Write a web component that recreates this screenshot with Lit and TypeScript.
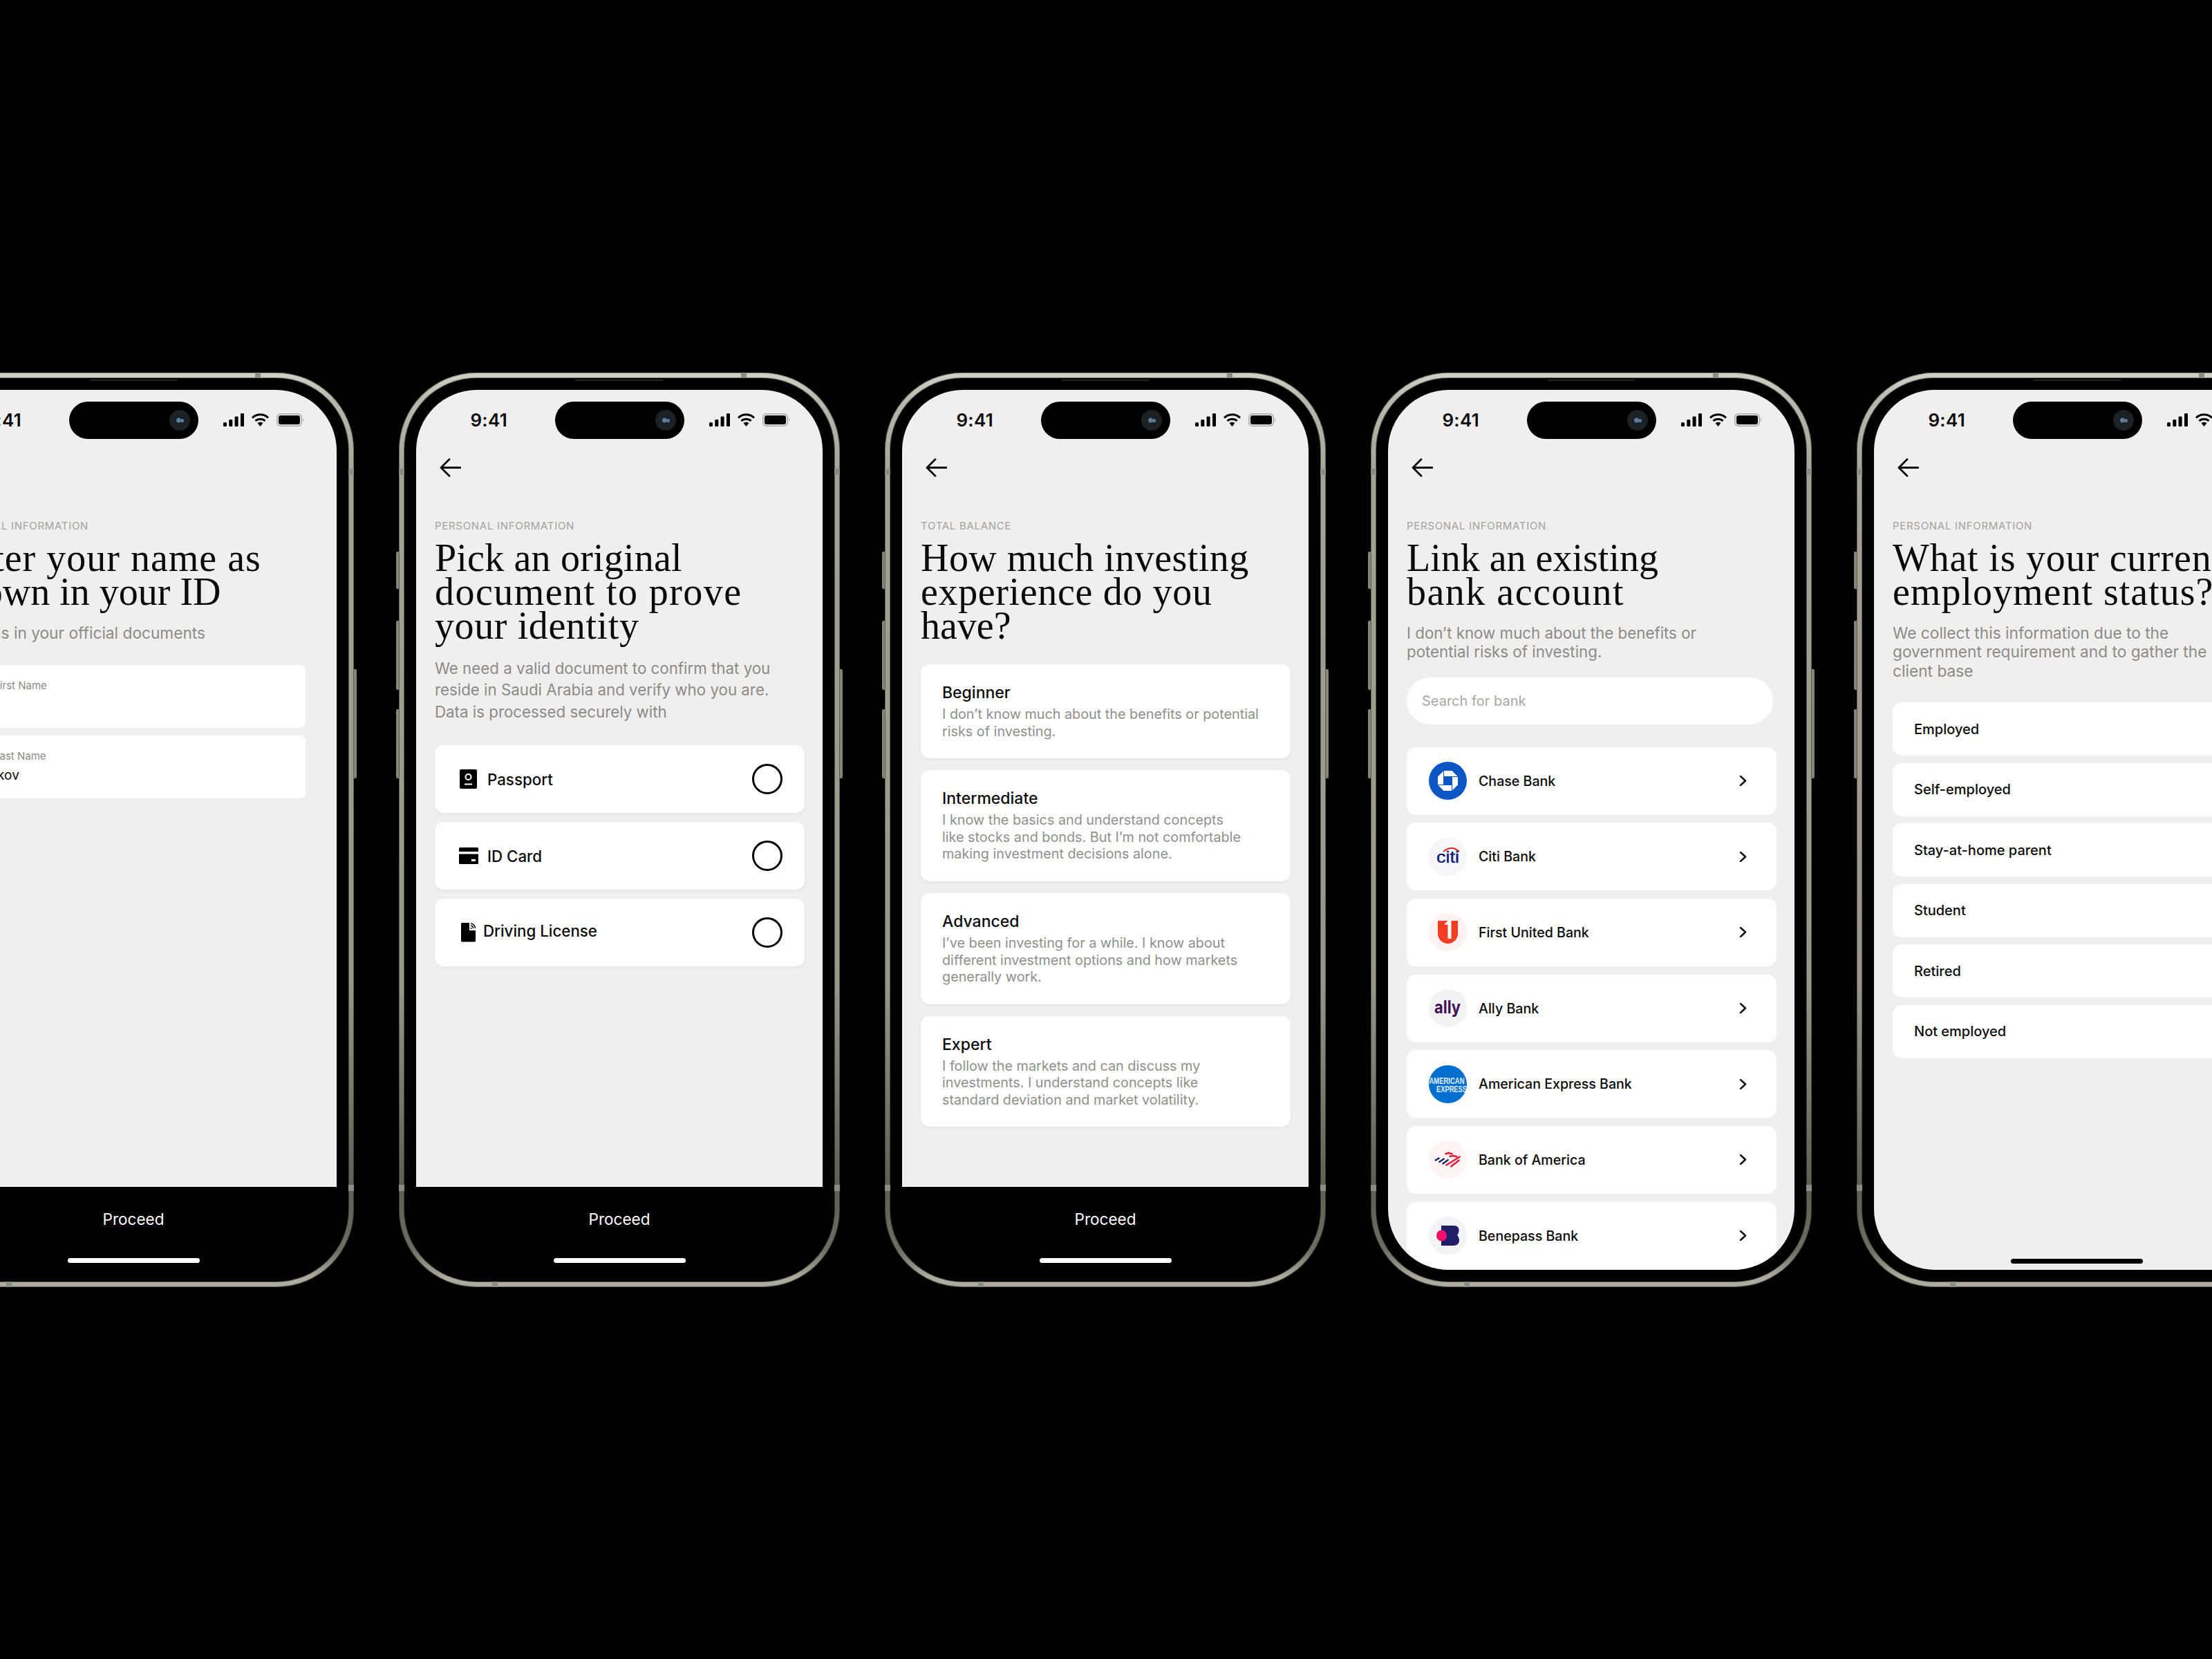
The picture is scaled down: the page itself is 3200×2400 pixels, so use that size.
import { LitElement, html, css, nothing } from "lit";
import { customElement } from "lit/decorators.js";

const chevron = html`<svg class="chev" width="11" height="15" viewBox="0 0 11 15"><path d="M2 1 L9 7.5 L2 14" fill="none" stroke="#0a0a0a" stroke-width="2.4" stroke-linecap="round" stroke-linejoin="round"/></svg>`;

const arrow = html`<svg width="31" height="27" viewBox="0 0 31 27"><path d="M30 13.5 H2.5 M14 1.5 L2 13.5 L14 25.5" fill="none" stroke="#0a0a0a" stroke-width="2.8" stroke-linecap="round" stroke-linejoin="round"/></svg>`;

const passport = html`<svg width="25" height="28" viewBox="0 0 25 28"><rect width="25" height="28" rx="2" fill="#000"/><circle cx="12.5" cy="11" r="4" fill="none" stroke="#fff" stroke-width="2.2"/><rect x="7" y="20.5" width="11" height="2" fill="#fff"/></svg>`;
const idcard = html`<svg width="28" height="24" viewBox="0 0 28 24"><path d="M1.5 0 H26.5 A1.5 1.5 0 0 1 28 1.5 V6 H0 V1.5 A1.5 1.5 0 0 1 1.5 0 Z M0 9.5 H28 V22.5 A1.5 1.5 0 0 1 26.5 24 H1.5 A1.5 1.5 0 0 1 0 22.5 Z" fill="#000"/><rect x="18" y="17" width="6" height="3" fill="#fff"/></svg>`;
const license = html`<svg width="21" height="28" viewBox="0 0 21 28"><path d="M1.5 0 H12 V11 H21 V26 A1.5 1.5 0 0 1 19.5 27.5 H1.5 A1.5 1.5 0 0 1 0 26 V1.5 A1.5 1.5 0 0 1 1.5 0 Z" fill="#000"/><g fill="none" stroke="#000" stroke-width="1.5"><path d="M14 1 A7 7 0 0 1 20.5 8"/><path d="M14 4 A4 4 0 0 1 17.5 8"/></g><circle cx="14.5" cy="8" r="1" fill="#000"/></svg>`;

const chase = html`<svg class="logo" viewBox="0 0 55 55"><circle cx="27.5" cy="27.5" r="27.5" fill="#0b57c5"/><g transform="translate(12.5 12.5)" fill="#fff" stroke="#0b57c5" stroke-width="1"><polygon points="9,0 21,0 30,9 9,9"/><polygon points="30,9 30,21 21,30 21,9"/><polygon points="21,30 9,30 0,21 21,21"/><polygon points="0,21 0,9 9,0 9,21"/></g></svg>`;
const citi = html`<svg class="logo" viewBox="0 0 55 55"><circle cx="27.5" cy="27.5" r="27.5" fill="#f6f6f9"/><path d="M21 20 Q33 10 44 20" fill="none" stroke="#e2231a" stroke-width="1.8"/><text x="11" y="36" class="citi" textLength="33" lengthAdjust="spacingAndGlyphs">citi</text></svg>`;
const first = html`<svg class="logo" viewBox="0 0 55 55"><circle cx="27.5" cy="27.5" r="27.5" fill="#fdf2f0"/><g transform="translate(13 11)"><path d="M0 0 H29 V18.5 A14.5 14.5 0 0 1 0 18.5 Z" fill="#f23c24"/><polygon points="9,5.5 14.5,0 19.5,0 19.5,26 14.5,26 14.5,5.5" fill="#fff"/></g></svg>`;
const ally = html`<svg class="logo" viewBox="0 0 55 55"><circle cx="27.5" cy="27.5" r="27.5" fill="#f4f1f5"/><text x="8" y="35" class="ally" textLength="38" lengthAdjust="spacingAndGlyphs">ally</text></svg>`;
const amex = html`<svg class="logo" viewBox="0 0 55 55"><defs><clipPath id="amexc"><circle cx="27.5" cy="27.5" r="27.5"/></clipPath></defs><circle cx="27.5" cy="27.5" r="27.5" fill="#016fd0"/><g clip-path="url(#amexc)"><text x="0.5" y="27" class="amex" textLength="51" lengthAdjust="spacingAndGlyphs">AMERICAN</text><text x="11" y="38.5" class="amex" textLength="44" lengthAdjust="spacingAndGlyphs">EXPRESS</text></g></svg>`;
const bofa = html`<svg class="logo" viewBox="0 0 55 55"><circle cx="27.5" cy="27.5" r="27.5" fill="#fdf3f3"/><g transform="translate(8.5 17)" fill="none" stroke-width="2.4"><path d="M0.5 12 L7 8 M6 14.5 L14 9 M11 17 L20 10.5" stroke="#1b2a6b"/><path d="M15 2.5 L20 0.8 L26 2.5 M21 6 L27 5 L33 6.5 M16 19 L37 6 M23 21 L36 11" stroke="#e31837"/></g></svg>`;
const bene = html`<svg class="logo" viewBox="0 0 55 55"><circle cx="27.5" cy="27.5" r="27.5" fill="#f3f3f7"/><path d="M18 13 H36 C45 13 45 22 41 27 C46 32 45 42 36 42 H18 Z" fill="#1f1d66"/><ellipse cx="18.5" cy="27.5" rx="7.5" ry="8" fill="#f0116a"/></svg>`;

type Phone = {
  label: string;
  head: [string, number][];
  para?: string[];
  back: boolean;
  kind: string;
};

const phones: Phone[] = [
  {
    label: "PERSONAL INFORMATION",
    head: [["Enter your name as", 1], ["shown in your ID", 0]],
    para: ["Write as in your official documents"],
    back: false,
    kind: "name",
  },
  {
    label: "PERSONAL INFORMATION",
    head: [["Pick an original", 0.2], ["document to prove", 1.45], ["your identity", 0.6]],
    para: [
      "We need a valid document to confirm that you",
      "reside in Saudi Arabia and verify who you are.",
      "Data is processed securely with",
    ],
    back: true,
    kind: "doc",
  },
  {
    label: "TOTAL BALANCE",
    head: [["How much investing", 0.45], ["experience do you", 0.65], ["have?", 0]],
    back: true,
    kind: "exp",
  },
  {
    label: "PERSONAL INFORMATION",
    head: [["Link an existing", 0], ["bank account", 1.5]],
    para: ["I don’t know much about the benefits or", "potential risks of investing."],
    back: true,
    kind: "bank",
  },
  {
    label: "PERSONAL INFORMATION",
    head: [["What is your current", 0.8], ["employment status?", 1]],
    para: [
      "We collect this information due to the",
      "government requirement and to gather the",
      "client base",
    ],
    back: true,
    kind: "job",
  },
];

const banks = [
  [chase, "Chase Bank"],
  [citi, "Citi Bank"],
  [first, "First United Bank"],
  [ally, "Ally Bank"],
  [amex, "American Express Bank"],
  [bofa, "Bank of America"],
  [bene, "Benepass Bank"],
] as const;

const levels = [
  ["Beginner", ["I don’t know much about the benefits or potential", "risks of investing."]],
  ["Intermediate", ["I know the basics and understand concepts", "like stocks and bonds. But I’m not comfortable", "making investment decisions alone."]],
  ["Advanced", ["I’ve been investing for a while. I know about", "different investment options and how markets", "generally work."]],
  ["Expert", ["I follow the markets and can discuss my", "investments. I understand concepts like", "standard deviation and market volatility."]],
] as const;

const jobs = ["Employed", "Self-employed", "Stay-at-home parent", "Student", "Retired", "Not employed"];

@customElement("app-root")
export class AppRoot extends LitElement {
  static styles = css`
    :host {
      display: flex;
      justify-content: center;
      align-items: center;
      width: 3200px;
      height: 2400px;
      overflow: hidden;
      background: #000;
      font-family: Inter, "Liberation Sans", sans-serif;
      color: #0a0a0a;
    }
    .row { display: flex; gap: 65px; flex: none; margin-left: -2px; }
    .phone {
      position: relative;
      flex: none;
      box-sizing: border-box;
      width: 638px;
      height: 1323px;
      padding: 8px;
      border-radius: 112px;
      background: linear-gradient(180deg, #d3d2c6 0%, #bab9ad 3%, #a3a295 12%, #979689 67%, #5f5e52 89%, #6f6e62 96%, #adac9f 99%);
      box-shadow: inset 0 0 0 1px rgba(0, 0, 0, 0.4);
    }
    .bezel {
      box-sizing: border-box;
      height: 100%;
      padding: 17px;
      border-radius: 104px;
      background: #000;
      box-shadow: 0 0 0 1px rgba(0, 0, 0, 0.4);
    }
    .screen {
      position: relative;
      display: flex;
      flex-direction: column;
      height: 100%;
      border-radius: 88px;
      overflow: hidden;
      background: #f0efed;
    }
    .screen.footed { background: linear-gradient(180deg, #f0efed 1153px, #000 1153px); }
    .band { position: absolute; background: #8d8b85; }
    .band.top { left: 495px; top: 0; width: 8px; height: 8px; }
    .band.l1 { left: 0; top: 139px; width: 8px; height: 9px; }
    .band.r1 { right: 0; top: 139px; width: 8px; height: 9px; }
    .band.l2 { left: 0; top: 1175px; width: 8px; height: 9px; }
    .band.r2 { right: 0; top: 1175px; width: 8px; height: 9px; }
    .band.bot { left: 135px; bottom: 0; width: 8px; height: 8px; }
    .speaker { position: absolute; left: 256px; top: 10px; width: 126px; height: 2px; background: #2a2618; }
    .btn { position: absolute; width: 4px; background: #85847a; border-radius: 2px 0 0 2px; }
    .btn.a { left: -4px; top: 259px; height: 54px; }
    .btn.b { left: -4px; top: 359px; height: 100px; }
    .btn.c { left: -4px; top: 487px; height: 100px; }
    .btn.d { right: -4px; top: 429px; height: 158px; border-radius: 0 2px 2px 0; }

    .status {
      display: grid;
      grid-template-columns: 1fr 187px 1fr;
      align-items: center;
      flex: none;
      padding-top: 17px;
      height: 54px;
    }
    .time { padding-left: 10px; text-align: center; font-size: 26px; font-weight: 600; letter-spacing: 0.3px; }
    .island {
      display: flex;
      align-items: center;
      justify-content: flex-end;
      box-sizing: border-box;
      height: 54px;
      padding-right: 12px;
      border-radius: 27px;
      background: #000;
    }
    .cam {
      width: 30px;
      height: 30px;
      border-radius: 50%;
      background: radial-gradient(circle at 45% 50%, #5c7c99 0 3px, transparent 4px),
        radial-gradient(circle at 62% 52%, #5c7c99 0 2px, transparent 3px), #1c2126;
    }
    .icons { display: flex; align-items: center; gap: 11px; padding-left: 36px; }

    .nav { flex: none; height: 27px; margin-top: 28px; padding-left: 34px; }
    .body { flex: 1; min-height: 0; padding: 0 26px 0 27px; }
    .label {
      margin-top: 61.5px;
      font-size: 15px;
      line-height: 20px;
      font-weight: 400;
      letter-spacing: 0.7px;
      color: #a3a3a1;
      white-space: nowrap;
    }
    .head {
      margin: 11.5px 0 0;
      font-family: "Liberation Serif", serif;
      font-weight: 400;
      font-size: 56px;
      line-height: 49px;
      color: #0a0a0a;
      white-space: nowrap;
    }
    .para {
      margin: 21px 0 0;
      font-size: 22.3px;
      line-height: 27.5px;
      color: #8b8b89;
      white-space: nowrap;
    }
    .para.loose { line-height: 31.5px; }
    .para.wide { font-size: 22.7px; }
    .list { display: flex; flex-direction: column; margin-top: 33px; }
    .card { box-sizing: border-box; flex: none; background: #fff; border-radius: 13px; }
    .shadow { box-shadow: 0 2px 4px rgba(0, 0, 0, 0.05); }

    .list.name { gap: 11px; margin-right: 19px; }
    .field { height: 91px; padding: 20px 0 0 65px; border-radius: 8px; }
    .field .k { font-size: 15px; line-height: 20px; color: #8b8b89; }
    .field .v { margin-top: 6px; font-size: 19px; line-height: 24px; }

    .list.doc { gap: 13px; }
    .doc-row {
      display: flex;
      align-items: center;
      height: 98px;
      padding: 0 32px 0 33px;
      font-size: 22.3px;
      font-weight: 500;
    }
    .ic { display: flex; justify-content: center; align-items: center; width: 31px; margin-right: 12px; }
    .doc-row.tight .ic { margin-right: 6px; }
    .doc-row.tight span { padding-bottom: 5px; }
    .radio { box-sizing: border-box; width: 44px; height: 44px; margin-left: auto; border: 3px solid #000; border-radius: 50%; }

    .list.exp { gap: 17.3px; margin-top: 31.6px; }
    .exp-card { padding: 27px 31px; }
    .exp-card .t { font-size: 23px; line-height: 28px; font-weight: 500; }
    .exp-card .d { margin-top: 5px; font-size: 19.8px; line-height: 24.5px; color: #8f8f8d; white-space: nowrap; }

    .search {
      box-sizing: border-box;
      display: flex;
      align-items: center;
      height: 68px;
      margin: 23px 5px 0 0;
      padding-left: 22px;
      border-radius: 34px;
      background: #fff;
      font-size: 20px;
      color: #a8a8a6;
    }
    .list.bank { gap: 11.7px; }
    .bank-row {
      display: flex;
      align-items: center;
      height: 98px;
      padding: 0 43px 0 32px;
      font-size: 19.6px;
      font-weight: 500;
    }
    .logo { flex: none; display: block; width: 55px; height: 55px; margin-right: 17px; }
    .chev { margin-left: auto; flex: none; }
    .citi { font: 400 24px "Liberation Sans", sans-serif; fill: #10157a; stroke: #10157a; stroke-width: 0.4px; }
    .ally { font: 700 25px Inter, sans-serif; fill: #3c1053; }
    .amex { font: 700 13px "Liberation Sans", sans-serif; fill: #e3effa; }

    .list.job { gap: 10.6px; margin-top: 32px; }
    .job-row {
      display: flex;
      align-items: center;
      height: 77px;
      padding-left: 31px;
      font-size: 20px;
      font-weight: 500;
    }

    .foot {
      flex: none;
      display: flex;
      flex-direction: column;
      align-items: center;
      height: 120px;
      color: #fff;
      font-size: 22.5px;
      font-weight: 400;
    }
    .proceed { margin-top: 32px; line-height: 30px; }
    .home { width: 191px; height: 7px; margin-top: 41px; border-radius: 4px; background: #fff; }
    .home.over { position: absolute; left: 198px; bottom: 9px; margin: 0; background: #000; }
  `;

  private status() {
    return html`<div class="status">
      <div class="time">9:41</div>
      <div class="island"><div class="cam"></div></div>
      <div class="icons">
        <svg width="30" height="19" viewBox="0 0 30 19"><g fill="#000"><rect x="0" y="13" width="5" height="6" rx="1.5"/><rect x="8.3" y="9" width="5" height="10" rx="1.2"/><rect x="16.6" y="4.5" width="5" height="14.5" rx="1.2"/><rect x="25" y="0" width="5" height="19" rx="1.2"/></g></svg>
        <svg width="25" height="19" viewBox="0 0 25 19"><g fill="none" stroke="#000" stroke-width="3"><path d="M1 6.5 A16.5 16.5 0 0 1 24 6.5"/><path d="M5.5 11 A10 10 0 0 1 19.5 11"/></g><path d="M12.5 19 L8.5 14 A6.5 6.5 0 0 1 16.5 14 Z" fill="#000"/></svg>
        <svg width="41" height="19" viewBox="0 0 41 19"><rect x="0.8" y="0.8" width="35.4" height="17.4" rx="5" fill="none" stroke="#a6a6a4" stroke-width="1.5"/><rect x="3" y="3" width="31" height="13" rx="3.2" fill="#000"/><path d="M38 6.5 Q40.5 9.5 38 12.5 Z" fill="#a6a6a4"/></svg>
      </div>
    </div>`;
  }

  private content(p: Phone) {
    switch (p.kind) {
      case "name":
        return html`<div class="list name">
          <div class="card field"><div class="k">First Name</div></div>
          <div class="card field"><div class="k">Last Name</div><div class="v">Ikov</div></div>
        </div>`;
      case "doc":
        return html`<div class="list doc">
          <div class="card shadow doc-row"><div class="ic">${passport}</div><span>Passport</span><div class="radio"></div></div>
          <div class="card shadow doc-row"><div class="ic">${idcard}</div><span>ID Card</span><div class="radio"></div></div>
          <div class="card shadow doc-row tight"><div class="ic">${license}</div><span>Driving License</span><div class="radio"></div></div>
        </div>`;
      case "exp":
        return html`<div class="list exp">
          ${levels.map(
            ([t, d]) => html`<div class="card shadow exp-card">
              <div class="t">${t}</div>
              <div class="d">${d.map((l) => html`${l}<br />`)}</div>
            </div>`
          )}
        </div>`;
      case "bank":
        return html`<div class="search">Search for bank</div>
          <div class="list bank">
            ${banks.map(([logo, name]) => html`<div class="card bank-row">${logo}<span>${name}</span>${chevron}</div>`)}
          </div>`;
      default:
        return html`<div class="list job">
          ${jobs.map((j) => html`<div class="card job-row">${j}</div>`)}
        </div>`;
    }
  }

  private phone(p: Phone) {
    const hasFoot = p.kind === "name" || p.kind === "doc" || p.kind === "exp";
    const paraClass = p.kind === "doc" ? "loose" : p.kind === "name" || p.kind === "job" ? "wide" : "";
    return html`<div class="phone">
      <div class="bezel">
        <div class="screen ${hasFoot ? "footed" : ""}">
          ${this.status()}
          <div class="nav">${p.back ? arrow : nothing}</div>
          <div class="body">
            <div class="label">${p.label}</div>
            <h1 class="head">${p.head.map(([l, ls]) => html`<span style="letter-spacing:${ls}px">${l}</span><br />`)}</h1>
            ${p.para ? html`<p class="para ${paraClass}">${p.para.map((l) => html`${l}<br />`)}</p>` : nothing}
            ${this.content(p)}
          </div>
          ${hasFoot
            ? html`<div class="foot"><div class="proceed">Proceed</div><div class="home"></div></div>`
            : p.kind === "job"
            ? html`<div class="home over"></div>`
            : nothing}
        </div>
      </div>
      <div class="speaker"></div>
      <div class="band top"></div><div class="band l1"></div><div class="band r1"></div>
      <div class="band l2"></div><div class="band r2"></div><div class="band bot"></div>
      <div class="btn a"></div><div class="btn b"></div><div class="btn c"></div><div class="btn d"></div>
    </div>`;
  }

  render() {
    return html`<div class="row">${phones.map((p) => this.phone(p))}</div>`;
  }
}
